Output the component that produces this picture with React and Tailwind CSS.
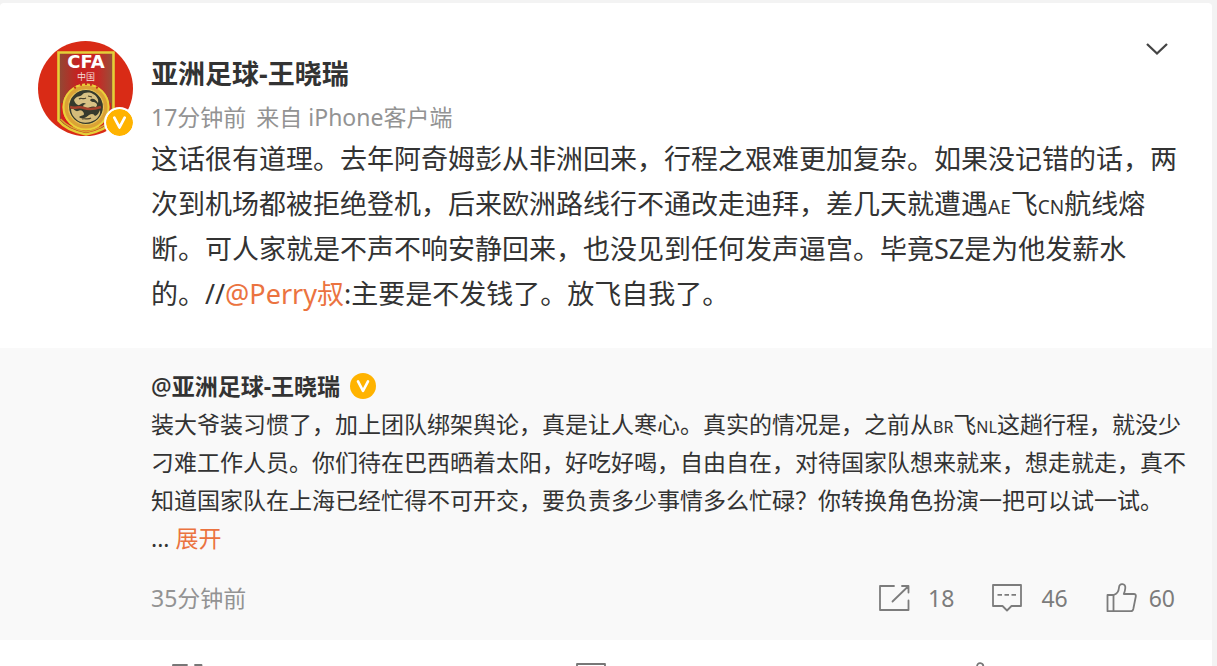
import React from 'react';

function ShareIcon() {
  return (
    <svg viewBox="0 0 32 32" className="size-8 shrink-0" fill="none" stroke="currentColor" strokeWidth="1.8" strokeLinejoin="round" strokeLinecap="round" aria-hidden="true">
      <path d="M16 4H2v24h28.500v-9.500M14.500 19.500 30 4.500M24 4h6.500v6.500" />
    </svg>
  );
}

function CommentIcon() {
  return (
    <svg viewBox="0 0 32 32" className="size-8 shrink-0" fill="none" stroke="currentColor" strokeWidth="1.8" strokeLinejoin="round" aria-hidden="true">
      <path d="M2 3h28v21h-9.500L16 28.500 11.500 24H2z" />
      <path d="M6.500 12.800h4.500M13.500 12.800h4.500M20.500 12.800h4.500" />
    </svg>
  );
}

function LikeIcon() {
  return (
    <svg viewBox="0 0 32 32" className="size-8 shrink-0" fill="none" stroke="currentColor" strokeWidth="1.8" strokeLinejoin="round" aria-hidden="true">
      <path d="M2.500 13h6v16.200h-6z" />
      <path d="M8.500 13c3.500-1 5.200-3.500 5.500-7.500.2-2.500 1.500-3.500 3.300-3.300C19.500 2.500 20.500 4 20.300 6c-.2 2.500-.8 4.500-1.500 6h10c1.600 0 2.300.9 2 2.500l-2.500 12.500c-.4 1.600-1.200 2.200-2.600 2.200H8.500" />
    </svg>
  );
}

function VerifiedBadge({ className }) {
  return (
    <svg viewBox="0 0 26 26" className={className} role="img" aria-label="V">
      <circle cx="13" cy="13" r="13" fill="#ffb300" />
      <path d="M8 8.300l5 9.500 5-9.500" fill="none" stroke="#fff" strokeWidth="2.600" strokeLinecap="round" strokeLinejoin="round" />
    </svg>
  );
}

function Avatar() {
  return (
    <div className="relative size-[95px] shrink-0">
      <svg viewBox="0 0 95 95" className="size-full" role="img" aria-label="CFA">
        <defs>
          <clipPath id="round"><circle cx="47.500" cy="47.500" r="47.500" /></clipPath>
          <linearGradient id="shield" x1="0" y1="0" x2="1" y2="0">
            <stop offset="0" stopColor="#8f4a35" />
            <stop offset="0.350" stopColor="#c52220" />
            <stop offset="0.700" stopColor="#c92724" />
            <stop offset="1" stopColor="#95513b" />
          </linearGradient>
        </defs>
        <g clipPath="url(#round)">
          <rect width="95" height="95" fill="#d92b16" />
          <path d="M20.500 11.500h55v68c-7 9-18 12-27.500 14-9.500-2-20.500-5-27.500-14z" fill="url(#shield)" stroke="#e4cf38" strokeWidth="2.600" />
          <path d="M23 79c7 7 16 10 25 12 9-2 18-5 25-12V62H23z" fill="#d6201b" />
          <path d="M22.500 78c7 8 16 11 25.500 13 9.500-2 18.500-5 25.500-13" fill="none" stroke="#d9a62e" strokeWidth="1.500" />
          <circle cx="48" cy="66" r="20.500" fill="none" stroke="#dba235" strokeWidth="6" />
          <circle cx="48" cy="66" r="22.500" fill="none" stroke="#ead13a" strokeWidth="2" />
          <circle cx="48" cy="66" r="17.500" fill="#363a2d" stroke="#e8c657" strokeWidth="1.200" />
          <path d="M36 59c3-5 6-3 8-5 2-3 8-3 11-1 4 2 6 6 5 9-2-3-4-5-7-4-2 1 0 3 3 3 3 1 4 3 2 5-5-2-7 2-11 1-3-1-2-4 1-4-3-3-6 2-8 1s-3-2-4-5z" fill="#d8c184" />
          <path d="M33 68c3-1 4 3 7 2 3-2 6 1 6 3s-3 1-5 3c3 3 8 0 10-2 3-2 5-1 6 1 3-1 4-4 5-6 1 4-2 8-5 10-5 3-13 4-18 0-4-3-6-7-6-11z" fill="#d5bc7a" />
          <path d="M32 66c5 2 9-1 14 1s11 1 17-1" fill="none" stroke="#a5412c" strokeWidth="2.500" />
          <path d="M41 58c2-2 4 1 7-1M44 78c3-1 6 1 9-1M50 55l4 1" fill="none" stroke="#4b432b" strokeWidth="1.200" />
          <path d="M36 46l2 1M42 43.500l2 .5M48 42v2M54 43.500l-2 .5M60 46l-2 1" stroke="#c7321b" strokeWidth="2" />
          <text x="48" y="27" textAnchor="middle" fill="#fff" fontFamily="DejaVu Sans, sans-serif" fontSize="18" fontWeight="700">CFA</text>
          <text x="48" y="39" textAnchor="middle" fill="#f5ddd8" fontFamily="Noto Sans CJK SC, sans-serif" fontSize="9">中国</text>
        </g>
      </svg>
      <VerifiedBadge className="absolute -right-[2px] -bottom-[2px] size-[31px] rounded-full border-2 border-white bg-white" />
    </div>
  );
}

function Count({ label, value, className, children }) {
  return (
    <button type="button" aria-label={label} className={'flex items-center ' + className}>
      {children}
      <span>{value}</span>
    </button>
  );
}

export default function App() {
  return (
    <div className="h-screen overflow-hidden bg-[#f3f3f3] pt-[3px] pr-[5px] font-['Noto_Sans','Noto_Sans_CJK_SC',sans-serif] text-[#333]">
      <article lang="zh-CN" className="rounded bg-white">
        <header className="flex gap-[18px] pt-[38px] pr-8 pb-8 pl-[38px]">
          <Avatar />
          <div className="min-w-0 flex-1">
            <div className="flex items-start justify-between">
              <div className="pt-[13px]">
                <h2 className="text-[27px] leading-[40px] font-bold">亚洲足球-王晓瑞</h2>
                <p className="flex gap-[10px] text-[23px] leading-[46px] text-[#939393]">
                  <time>17分钟前</time>
                  <span>来自 iPhone客户端</span>
                </p>
              </div>
              <button type="button" aria-label="更多" className="mr-[10px] p-px text-[#444]">
                <svg viewBox="0 0 24 14" className="h-[14px] w-6" fill="none" stroke="currentColor" strokeWidth="2.300" aria-hidden="true">
                  <path d="M2 2l10 9.500L22 2" />
                </svg>
              </button>
            </div>
            <p className="-mt-1 text-[27px] leading-[45px] whitespace-nowrap">
              这话很有道理。去年阿奇姆彭从非洲回来，行程之艰难更加复杂。如果没记错的话，两<br />
              次到机场都被拒绝登机，后来欧洲路线行不通改走迪拜，差几天就遭遇<span className="text-[19px] leading-none">AE</span>飞<span className="text-[19px] leading-none">CN</span>航线熔<br />
              断。可人家就是不声不响安静回来，也没见到任何发声逼宫。毕竟SZ是为他发薪水<br />
              的。//<a href="#perry" className="text-[#eb7340]">@Perry叔</a>:主要是不发钱了。放飞自我了。
            </p>
          </div>
        </header>

        <section className="bg-[#f9f9f9] pt-[19px] pr-[37px] pb-[26px] pl-[151px]">
          <h3 className="flex items-center gap-[10px] text-[23px] leading-[38px] font-bold">
            <a href="#author"><span className="font-medium">@</span>亚洲足球-王晓瑞</a>
            <VerifiedBadge className="size-[26px]" />
          </h3>
          <p className="text-[23px] leading-[38px] whitespace-nowrap">
            装大爷装习惯了，加上团队绑架舆论，真是让人寒心。真实的情况是，之前从<span className="text-[16px] leading-none">BR</span>飞<span className="text-[16px] leading-none">NL</span>这趟行程，就没少<br />
            刁难工作人员。你们待在巴西晒着太阳，好吃好喝，自由自在，对待国家队想来就来，想走就走，真不<br />
            知道国家队在上海已经忙得不可开交，要负责多少事情多么忙碌？你转换角色扮演一把可以试一试。<br />
            ... <a href="#expand" className="text-[#eb7340]">展开</a>
          </p>
          <div className="mt-[25px] flex items-center justify-between text-[23px] leading-8 text-[#939393]">
            <time>35分钟前</time>
            <div className="flex gap-[37px] text-[#7c7c7c]">
              <Count label="转发" value="18" className="gap-[18px]"><ShareIcon /></Count>
              <Count label="评论" value="46" className="gap-[18px]"><CommentIcon /></Count>
              <Count label="赞" value="60" className="gap-3"><LikeIcon /></Count>
            </div>
          </div>
        </section>

        <footer className="grid grid-cols-3 pt-[21px] pb-5 text-[#777]">
          <button type="button" aria-label="转发微博" className="flex justify-center pr-[30px]"><ShareIcon /></button>
          <button type="button" aria-label="评论微博" className="flex justify-center pr-[30px]"><CommentIcon /></button>
          <button type="button" aria-label="赞微博" className="flex justify-center pr-[62px]"><LikeIcon /></button>
        </footer>
      </article>
    </div>
  );
}
